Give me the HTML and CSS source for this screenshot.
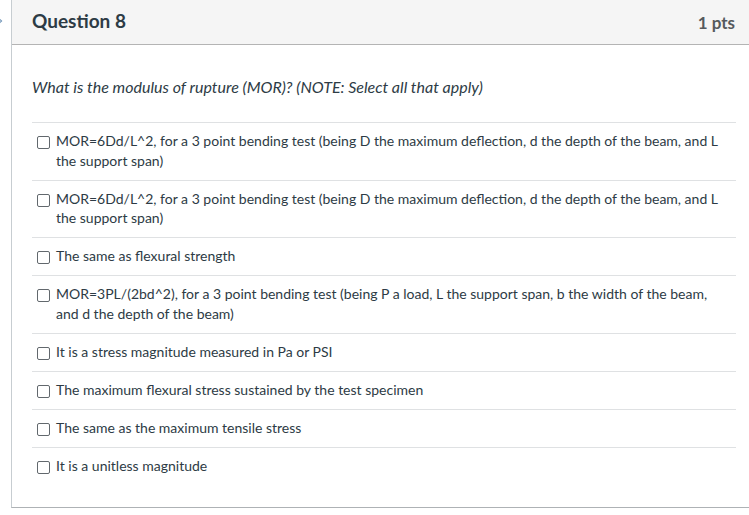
FILE: index.html
```html
<!DOCTYPE html>
<html>
<head>
<meta charset="utf-8">
<link rel="stylesheet" href="styles.css">
</head>
<body>
<span class="edge-arrow"></span>
<div class="card">
  <div class="card-header">
    <h2 class="title">Question 8</h2>
    <span class="pts">1 pts</span>
  </div>
  <div class="card-body">
    <p class="question">What is the modulus of rupture (MOR)? (NOTE: Select all that apply)</p>
    <div class="answers">
      <label class="answer"><span class="box"></span><span class="text">MOR=6Dd/L^2, for a 3 point bending test (being D the maximum deflection, d the depth of the beam, and L the support span)</span></label>
      <label class="answer"><span class="box"></span><span class="text">MOR=6Dd/L^2, for a 3 point bending test (being D the maximum deflection, d the depth of the beam, and L the support span)</span></label>
      <label class="answer"><span class="box"></span><span class="text">The same as flexural strength</span></label>
      <label class="answer"><span class="box"></span><span class="text">MOR=3PL/(2bd^2), for a 3 point bending test (being P a load, L the support span, b the width of the beam, and d the depth of the beam)</span></label>
      <label class="answer"><span class="box"></span><span class="text">It is a stress magnitude measured in Pa or PSI</span></label>
      <label class="answer"><span class="box"></span><span class="text">The maximum flexural stress sustained by the test specimen</span></label>
      <label class="answer"><span class="box"></span><span class="text">The same as the maximum tensile stress</span></label>
      <label class="answer"><span class="box"></span><span class="text">It is a unitless magnitude</span></label>
    </div>
  </div>
</div>
</body>
</html>
```
FILE: styles.css
```css
html, body {
  margin: 0;
  padding: 0;
  background: #ffffff;
  overflow: hidden;
}
body {
  font-family: Lato, "Liberation Sans", sans-serif;
  color: #2d3b45;
  position: relative;
}
.edge-arrow {
  position: absolute;
  left: -5px;
  top: 18px;
  width: 5px;
  height: 5px;
  border-top: 1.5px solid #7a9cbc;
  border-right: 1.5px solid #7a9cbc;
  transform: rotate(45deg);
}
.card {
  margin-left: 11px;
  width: 746px;
  border-left: 1px solid #c7cdd1;
  border-bottom: 1px solid #aeb2b5;
}
.card-header {
  display: flex;
  justify-content: space-between;
  align-items: center;
  height: 44px;
  padding: 0 23px 0 20px;
  background: #f5f5f5;
  border-bottom: 1px solid #b4b4b4;
}
.title {
  margin: 0;
  font-size: 19px;
  font-weight: 700;
  color: #2d3b45;
  position: relative;
  top: -2px;
}
.pts {
  font-size: 17px;
  font-weight: 700;
  color: #555a5e;
}
.card-body {
  padding: 30px 0 21px 20px;
}
.question {
  margin: 0 0 23px 0;
  font-size: 16px;
  line-height: 24px;
  font-style: italic;
}
.answers {
  width: 704px;
}
.answer {
  display: flex;
  align-items: flex-start;
  border-top: 1px solid #dfe1e3;
  padding: 8px 0 9.5px 0;
  font-size: 14px;
  line-height: 1.4;
  color: #2d3b45;
}
.box {
  flex: none;
  box-sizing: border-box;
  width: 13px;
  height: 13px;
  margin: 5px 6px 0 5px;
  border: 1px solid #62686d;
  border-radius: 2px;
  background: #fff;
}
.text {
  flex: 1;
  padding-right: 10px;
}
```
